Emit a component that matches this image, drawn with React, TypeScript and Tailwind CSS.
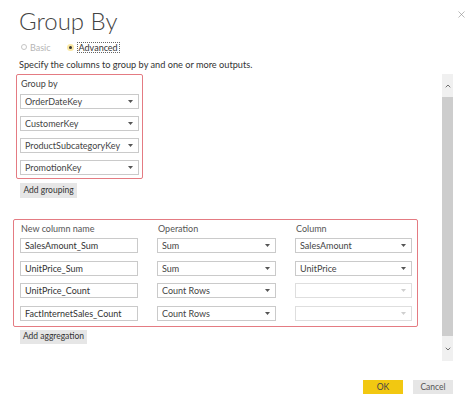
import { ChevronDown, ChevronUp, X } from "lucide-react";

const groupKeys = ["OrderDateKey", "CustomerKey", "ProductSubcategoryKey", "PromotionKey"];

const aggregations = [
  { name: "SalesAmount_Sum", op: "Sum", col: "SalesAmount" },
  { name: "UnitPrice_Sum", op: "Sum", col: "UnitPrice" },
  { name: "UnitPrice_Count", op: "Count Rows", col: "" },
  { name: "FactInternetSales_Count", op: "Count Rows", col: "" },
];

function Caret({ faded }: { faded?: boolean }) {
  return (
    <svg width="5" height="3" viewBox="0 0 5 3" className="shrink-0">
      <path d="M0 0 L5 0 L2.5 3 Z" fill={faded ? "#cfcfcf" : "#555"} />
    </svg>
  );
}

function Select({ value, width, disabled }: { value: string; width: string; disabled?: boolean }) {
  return (
    <div
      className={`${width} h-[15px] flex items-center justify-between pl-[4px] pr-[5px] border bg-white text-[9px] leading-none ${
        disabled ? "border-[#dedede]" : "border-[#cacaca]"
      }`}
    >
      <span className="text-[#444]">{value}</span>
      <Caret faded={disabled} />
    </div>
  );
}

export default function App() {
  return (
    <div className="w-[474px] h-[414px] bg-white text-[#333] flex flex-col" style={{ fontFamily: "Lato, 'Noto Sans', sans-serif" }}>
      <div className="flex justify-between items-start pl-[19px] pr-[7px] pt-[6px]">
        <h1 className="text-[24px] font-light leading-[30px] text-[#444]">Group By</h1>
        <X size={11} strokeWidth={1.3} className="text-[#888] mt-[3px]" />
      </div>

      <div className="flex items-center gap-[10px] pl-[21px] mt-[5px] text-[9px] leading-none h-[12px]">
        <label className="flex items-center gap-[3px] text-[#b5b5b5]">
          <span className="w-[6px] h-[6px] rounded-full border border-[#c5c5c5]" />
          Basic
        </label>
        <label className="flex items-center gap-[3px] text-[#333] ml-[6px]">
          <span className="w-[7px] h-[7px] rounded-full bg-[#fbe8a2] flex items-center justify-center">
            <span className="w-[3px] h-[3px] rounded-full bg-[#333]" />
          </span>
          <span className="border border-dotted border-[#666] px-[1px]">Advanced</span>
        </label>
      </div>

      <p className="pl-[19px] mt-[6px] text-[9.2px] leading-[12px] text-[#333]">
        Specify the columns to group by and one or more outputs.
      </p>

      <div className="flex mt-[3px] flex-1">
        <div className="w-[442px] flex flex-col">
          <div className="ml-[16px] w-[127px] border-[1.5px] border-[#e47b82] rounded-[2px] px-[3px] pt-[2px] pb-[3px]">
            <div className="text-[9px] leading-[14px] pl-[1px] text-[#444]">Group by</div>
            <div className="flex flex-col gap-[7px] mt-[3px]">
              {groupKeys.map((k) => (
                <Select key={k} value={k} width="w-[119px]" />
              ))}
            </div>
          </div>

          <button className="ml-[20px] mt-[4px] w-[57px] h-[15px] bg-[#e6e6e6] text-[8.5px] leading-none text-[#333]">
            Add grouping
          </button>

          <div className="ml-[13px] mt-[21px] w-[405px] border-[1.5px] border-[#e47b82] rounded-[2px] pl-[6px] pt-[2px] pb-[5px]">
            <div className="flex gap-[19px] text-[9px] leading-[14px] text-[#555]">
              <span className="w-[118px] pl-[1px]">New column name</span>
              <span className="w-[119px] pl-[1px]">Operation</span>
              <span className="w-[117px] pl-[1px]">Column</span>
            </div>
            <div className="flex flex-col gap-[7.5px] mt-[2px]">
              {aggregations.map((a) => (
                <div key={a.name} className="flex gap-[19px]">
                  <div className="w-[118px] h-[15px] flex items-center pl-[4px] border border-[#cacaca] text-[9px] leading-none text-[#333]">
                    {a.name}
                  </div>
                  <Select value={a.op} width="w-[119px]" />
                  <Select value={a.col} width="w-[117px]" disabled={a.col === ""} />
                </div>
              ))}
            </div>
          </div>

          <button className="ml-[20px] mt-[3px] w-[67px] h-[14px] bg-[#e6e6e6] text-[8.5px] leading-none text-[#333]">
            Add aggregation
          </button>
        </div>

        <div className="w-[11px] h-[287px] bg-[#f0f0f0] flex flex-col items-center">
          <div className="h-[23px] flex items-center justify-center">
            <ChevronUp size={8} strokeWidth={2.5} className="text-[#555]" />
          </div>
          <div className="w-full h-[239px] bg-[#cdcdcd]" />
          <div className="flex-1 flex items-center justify-center">
            <ChevronDown size={8} strokeWidth={2.5} className="text-[#555]" />
          </div>
        </div>
      </div>

      <div className="flex justify-end gap-[10px] pr-[21px] pb-[20px]">
        <button className="w-[40px] h-[14px] bg-[#f2c811] text-[8.5px] leading-none text-[#444]">OK</button>
        <button className="w-[40px] h-[14px] bg-[#e6e6e6] text-[8.5px] leading-none text-[#555]">Cancel</button>
      </div>
    </div>
  );
}
